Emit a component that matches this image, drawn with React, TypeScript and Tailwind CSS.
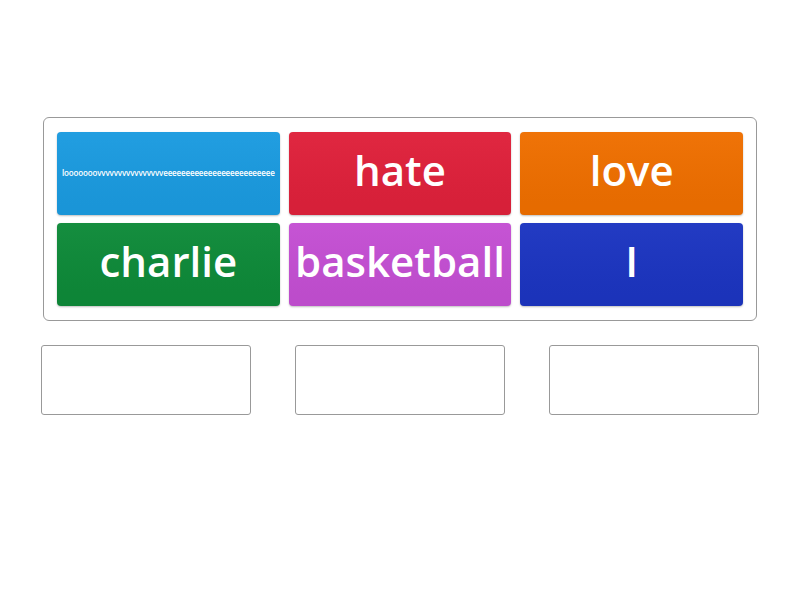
import React from 'react';

const tiles = [
  { label: 'looooooovvvvvvvvvvvvvvvveeeeeeeeeeeeeeeeeeeeeeeee', bg: 'bg-[#1b9be0]', small: true },
  { label: 'hate', bg: 'bg-[#df213b]' },
  { label: 'love', bg: 'bg-[#ef6f00]' },
  { label: 'charlie', bg: 'bg-[#0e8a39]' },
  { label: 'basketball', bg: 'bg-[#c44fd3]' },
  { label: 'I', bg: 'bg-[#1c35c1]' },
];

export default function App() {
  return (
    <div className="w-[800px] h-[600px] bg-white font-['Open_Sans',sans-serif]">
      <div className="pt-[117px] pl-[43px]">
        {/* Word bank */}
        <div className="w-[714px] border border-[#999999] rounded-[6px] px-[13px] py-[14px]">
          <div className="grid grid-cols-3 gap-x-[9px] gap-y-[8px]">
            {tiles.map((t) => (
              <div
                key={t.label}
                className={`${t.bg} h-[83px] rounded-[4px] flex items-center justify-center text-white shadow-[0_1px_2px_rgba(0,0,0,0.25)] bg-gradient-to-b from-white/[0.03] to-black/[0.04] overflow-hidden`}
              >
                <span
                  className={
                    t.small
                      ? 'text-[8px] font-semibold tracking-[-0.15px] pb-[1px]'
                      : 'text-[42px] font-semibold leading-none pb-[8px]'
                  }
                >
                  {t.label}
                </span>
              </div>
            ))}
          </div>
        </div>
      </div>

      {/* Drop targets */}
      <div className="flex gap-[44px] pl-[41px] mt-[24px]">
        <div className="w-[210px] h-[70px] border border-[#999999] rounded-[3px]" />
        <div className="w-[210px] h-[70px] border border-[#999999] rounded-[3px]" />
        <div className="w-[210px] h-[70px] border border-[#999999] rounded-[3px]" />
      </div>
    </div>
  );
}
